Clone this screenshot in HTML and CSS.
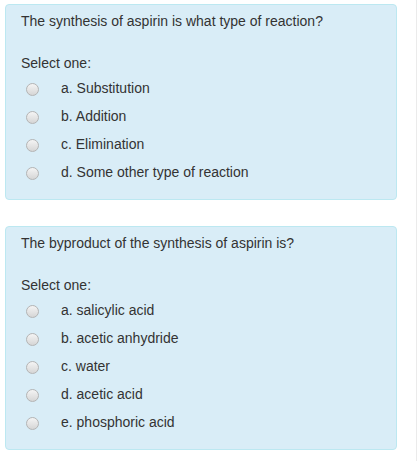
FILE: index.html
```html
<!DOCTYPE html>
<html>
<head>
<meta charset="utf-8">
<link rel="stylesheet" href="styles.css">
</head>
<body>
<div class="page">
  <div class="que">
    <div class="qtext">The synthesis of aspirin is what type of reaction?</div>
    <div class="prompt">Select one:</div>
    <div class="answer">
      <div class="opt"><span class="radio"></span><span class="label">a. Substitution</span></div>
      <div class="opt"><span class="radio"></span><span class="label">b. Addition</span></div>
      <div class="opt"><span class="radio"></span><span class="label">c. Elimination</span></div>
      <div class="opt"><span class="radio"></span><span class="label">d. Some other type of reaction</span></div>
    </div>
  </div>
  <div class="que">
    <div class="qtext">The byproduct of the synthesis of aspirin is?</div>
    <div class="prompt">Select one:</div>
    <div class="answer">
      <div class="opt"><span class="radio"></span><span class="label">a. salicylic acid</span></div>
      <div class="opt"><span class="radio"></span><span class="label">b. acetic anhydride</span></div>
      <div class="opt"><span class="radio"></span><span class="label">c. water</span></div>
      <div class="opt"><span class="radio"></span><span class="label">d. acetic acid</span></div>
      <div class="opt"><span class="radio"></span><span class="label">e. phosphoric acid</span></div>
    </div>
  </div>
</div>
</body>
</html>
```
FILE: styles.css
```css
html, body {
  margin: 0;
  padding: 0;
  background: #fff;
}
body {
  font-family: "Liberation Sans", Arial, sans-serif;
  font-size: 14px;
  color: #333;
}
.page {
  width: 417px;
  min-height: 461px;
  border-right: 1px solid #ebebeb;
  padding: 4px 0 0 5px;
  box-sizing: border-box;
  display: flex;
  flex-direction: column;
  gap: 26px;
}
.que {
  width: 392px;
  box-sizing: border-box;
  background: #d9edf7;
  border: 1px solid #bce8f1;
  border-radius: 4px;
  padding: 7px 15px 13px 15px;
}
.qtext {
  line-height: 18px;
}
.prompt {
  line-height: 18px;
  margin-top: 24px;
}
.answer {
  margin-top: 2px;
  display: flex;
  flex-direction: column;
}
.opt {
  height: 28px;
  display: flex;
  align-items: center;
}
.radio {
  width: 11px;
  height: 11px;
  border: 1px solid #b4b4b4;
  border-radius: 50%;
  background: linear-gradient(#f4f4f4, #d6d6d6);
  margin: 3px 22px 0 5px;
  flex: none;
}
.label {
  line-height: 18px;
}
```
